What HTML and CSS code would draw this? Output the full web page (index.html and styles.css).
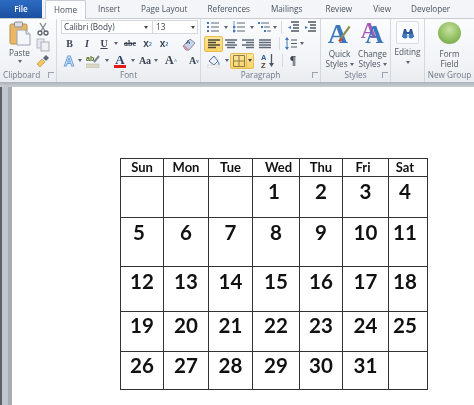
FILE: index.html
```html
<!DOCTYPE html>
<html lang="en">
<head>
<meta charset="utf-8">
<title>Calendar document</title>
<link rel="stylesheet" href="styles.css">
</head>
<body>
<div class="app">
  <nav class="tabs">
    <span class="tab file">File</span>
    <span class="tab home">Home</span>
    <span class="tab t-insert">Insert</span>
    <span class="tab t-layout">Page Layout</span>
    <span class="tab t-ref">References</span>
    <span class="tab t-mail">Mailings</span>
    <span class="tab t-review">Review</span>
    <span class="tab t-view">View</span>
    <span class="tab t-dev">Developer</span>
  </nav>
  <div class="ribbon">
    <section class="grp g-clip">
      <div class="body clip-body">
        <div class="paste">
          <svg width="22" height="25" viewBox="0 0 22 25"><rect x="1" y="3" width="17" height="20" rx="1.500" fill="#e9b765" stroke="#b98d45"/><rect x="5.500" y="1" width="8" height="5" rx="1" fill="#d9dde3" stroke="#8b8f96"/><path d="M8 9h9l4 4v11H8z" fill="#f4f6fa" stroke="#9aa3b2"/><path d="M17 9v4h4" fill="#dfe4ec" stroke="#9aa3b2"/></svg>
          <span class="big-label">Paste</span>
          <i class="arr"></i>
        </div>
        <div class="clip-tools">
          <svg width="14" height="14" viewBox="0 0 14 14"><path d="M4 1l5 8M10 1L5 9" stroke="#7d8694" stroke-width="1.300" fill="none"/><circle cx="4" cy="11" r="2" fill="none" stroke="#59606c" stroke-width="1.300"/><circle cx="10" cy="11" r="2" fill="none" stroke="#59606c" stroke-width="1.300"/></svg>
          <svg width="14" height="14" viewBox="0 0 14 14"><rect x="1" y="1" width="7" height="9" fill="#e6e8ec" stroke="#b4b9c1"/><rect x="5" y="4" width="8" height="9" fill="#eef0f3" stroke="#aab0b9"/></svg>
          <svg width="14" height="14" viewBox="0 0 14 14"><path d="M1 10l5-5 3 3-5 5z" fill="#f1c860" stroke="#a98a3a" stroke-width=".6"/><path d="M7 4l3-3 3 3-3 3z" fill="#5b6676"/></svg>
        </div>
      </div>
      <div class="label">Clipboard<i class="launch"></i></div>
    </section>

    <section class="grp g-font">
      <div class="body font-body">
        <div class="combo">
          <span class="c-name">Calibri (Body)<i class="arr dark"></i></span>
          <span class="c-size">13<i class="arr dark"></i></span>
        </div>
        <div class="row">
          <span class="cell w17 tb">B</span>
          <span class="cell w18 ti">I</span>
          <span class="cell w16 tu">U</span>
          <span class="cell w8"><i class="arr"></i></span>
          <span class="cell w20 ts">abe</span>
          <span class="cell w15 tx">x<sub>2</sub></span>
          <span class="cell w18 tx">x<sup>2</sup></span>
          <span class="cell w25 end">
            <svg width="15" height="14" viewBox="0 0 15 14"><path d="M2 9l7-7 5 4-6 7H5z" fill="#c7d4ea" stroke="#7f8ea8"/><path d="M3 9l4 4" stroke="#d98ea0" stroke-width="2"/><text x="5" y="7" font-size="6" font-family="Liberation Sans" fill="#36507c" font-weight="700">A</text></svg>
          </span>
        </div>
        <div class="row">
          <span class="cell w16"><svg width="14" height="14" viewBox="0 0 14 14"><text x="7" y="12" text-anchor="middle" font-size="14" font-family="Liberation Sans" font-weight="700" fill="#eaf3ff" stroke="#6ea2dc" stroke-width="1">A</text></svg></span>
          <span class="cell w6"><i class="arr"></i></span>
          <span class="cell w20"><svg width="14" height="14" viewBox="0 0 14 14"><text x="0" y="7" font-size="7" font-family="Liberation Sans" font-weight="700" fill="#4d6a1a">ab</text><path d="M8 8l5-6" stroke="#7b8594" stroke-width="2"/><rect x="0" y="10" width="13" height="4" fill="#d9d8c4" stroke="#b0b0a0" stroke-width=".5"/></svg></span>
          <span class="cell w8"><i class="arr"></i></span>
          <span class="cell w18"><svg width="14" height="14" viewBox="0 0 14 14"><text x="7" y="10" text-anchor="middle" font-size="13" font-family="Liberation Serif" font-weight="700" fill="#27406b">A</text><rect x="1" y="11" width="12" height="3" fill="#e01b1b"/></svg></span>
          <span class="cell w8"><i class="arr"></i></span>
          <span class="cell w16 taa">Aa</span>
          <span class="cell w6"><i class="arr"></i></span>
          <span class="cell w27 end tgrow">A<sup>^</sup></span>
          <span class="cell w16 tshrink">A<sup>v</sup></span>
        </div>
      </div>
      <div class="label">Font</div>
    </section>

    <section class="grp g-para">
      <div class="body para-body">
        <div class="row top">
          <span class="cell w16"><svg width="12" height="12" viewBox="0 0 12 12"><path d="M4 2h8M4 6h8M4 10h8" stroke="#5d6877"/><path d="M0 1h2v2H0zM0 5h2v2H0zM0 9h2v2H0z" fill="#3f76bd"/></svg></span>
          <span class="cell w10"><i class="arr"></i></span>
          <span class="cell w16"><svg width="12" height="12" viewBox="0 0 12 12"><path d="M4 2h8M4 6h8M4 10h8" stroke="#5d6877"/><path d="M1 0v4M0 5h2v2H0zM0 9h2v2H0z" stroke="#3f76bd" fill="#3f76bd" stroke-width=".7"/></svg></span>
          <span class="cell w10"><i class="arr"></i></span>
          <span class="cell w15"><svg width="13" height="12" viewBox="0 0 13 12"><path d="M3 2h8M6 6h6M9 10h4" stroke="#5d6877"/><path d="M0 1h2v2H0zM3 5h2v2H3zM6 9h2v2H6z" fill="#3f76bd"/></svg></span>
          <span class="cell w6"><i class="arr"></i></span>
          <span class="vsep s-top"></span>
          <span class="cell w18"><svg width="12" height="12" viewBox="0 0 12 12"><path d="M4 1h8M6 4h6M6 7h6M4 10h8" stroke="#4d5866" stroke-width="1.400"/><path d="M4 5l-3 1.500 3 1.500z" fill="#3f76bd"/></svg></span>
          <span class="cell w16"><svg width="12" height="12" viewBox="0 0 12 12"><path d="M4 1h8M6 4h6M6 7h6M4 10h8" stroke="#4d5866" stroke-width="1.400"/><path d="M1 5l3 1.500-3 1.500z" fill="#3f76bd"/></svg></span>
        </div>
        <div class="row">
          <span class="btn-on a-left"><svg width="12" height="10" viewBox="0 0 12 10"><path d="M0 1h12M0 3.500h8M0 6h12M0 8.500h8" stroke="#4c4a3a" stroke-width="1.700"/></svg></span>
          <span class="cell w16"><svg width="12" height="10" viewBox="0 0 12 10"><path d="M0 1h12M2 3.500h8M0 6h12M2 8.500h8" stroke="#5d6877" stroke-width="1.500"/></svg></span>
          <span class="cell w17"><svg width="12" height="10" viewBox="0 0 12 10"><path d="M0 1h12M4 3.500h8M0 6h12M4 8.500h8" stroke="#5d6877" stroke-width="1.500"/></svg></span>
          <span class="cell w17"><svg width="12" height="10" viewBox="0 0 12 10"><path d="M0 1h12M0 3.500h12M0 6h12M0 8.500h12" stroke="#5d6877" stroke-width="1.500"/></svg></span>
          <span class="vsep s-mid"></span>
          <span class="cell w16 after-sep"><svg width="12" height="13" viewBox="0 0 12 13"><path d="M2 1v11" stroke="#3f76bd"/><path d="M0 3l2-3 2 3zM0 10l2 3 2-3z" fill="#3f76bd"/><path d="M6 3h6M6 6.500h6M6 10h6" stroke="#4d5866"/></svg></span>
          <span class="cell w6"><i class="arr"></i></span>
        </div>
        <div class="row">
          <span class="cell w18"><svg width="14" height="14" viewBox="0 0 14 14"><path d="M2 7l5-5 4 5-4 4z" fill="#eef2f7" stroke="#4f6e9c"/><path d="M11 7c2 2 2 4 1 4s-1-2-1-4" fill="#4f9ddc"/><rect x="0" y="11" width="12" height="3" fill="#f4f4f4" stroke="#c0c0c0" stroke-width=".5"/></svg></span>
          <span class="cell w7"><i class="arr"></i></span>
          <span class="btn-on border">
            <span class="b-main"><svg width="12" height="12" viewBox="0 0 12 12"><path d="M.5.500h11v11H.500zM6 .500v11M.500 6h11" fill="none" stroke="#8b7d4a"/></svg></span>
            <span class="b-arr"><i class="arr dark"></i></span>
          </span>
          <span class="cell w28"><svg width="14" height="15" viewBox="0 0 14 15"><text x="0" y="7" font-size="7.500" font-family="Liberation Sans" font-weight="700" fill="#2f5a98">A</text><text x="0" y="15" font-size="7.500" font-family="Liberation Sans" font-weight="700" fill="#54402a">Z</text><path d="M10.500 1v11" stroke="#4d5866" stroke-width="1.300"/><path d="M8 10l2.500 4 2.500-4z" fill="#4d5866"/></svg></span>
          <span class="vsep"></span>
          <span class="cell w20 tp">¶</span>
        </div>
      </div>
      <div class="label">Paragraph<i class="launch"></i></div>
    </section>

    <section class="grp g-styles">
      <div class="body style-body">
        <div class="big">
          <svg width="26" height="24" viewBox="0 0 26 24"><text x="-1" y="22.500" font-size="32" font-family="Liberation Serif" fill="#3c76bd" font-weight="700">A</text><path d="M13 19L24 4" stroke="#8a8f55" stroke-width="2.500"/><path d="M12 21l3-3" stroke="#b94d2b" stroke-width="3"/></svg>
          <span class="big-label">Quick</span>
          <span class="big-label">Styles<i class="arr"></i></span>
        </div>
        <div class="big">
          <svg width="26" height="24" viewBox="0 0 26 24"><text x="-1" y="17" font-size="26" font-family="Liberation Serif" fill="#a45ab8" font-weight="700">A</text><text x="4" y="22.500" font-size="29" font-family="Liberation Serif" fill="#3c76bd" font-weight="700">A</text></svg>
          <span class="big-label">Change</span>
          <span class="big-label">Styles<i class="arr"></i></span>
        </div>
      </div>
      <div class="label">Styles<i class="launch"></i></div>
    </section>

    <section class="grp g-edit">
      <div class="edit-body">
        <span class="edit-btn"><svg width="14" height="12" viewBox="0 0 14 12"><path d="M1 10l2-8h2l1 3h2l1-3h2l2 8H9L8 7H6l-1 3z" fill="#2f5a98"/><circle cx="4" cy="9" r="2.500" fill="#3f76bd"/><circle cx="10" cy="9" r="2.500" fill="#3f76bd"/></svg></span>
        <span class="big-label">Editing</span>
        <i class="arr"></i>
      </div>
    </section>

    <section class="grp g-new">
      <div class="body new-body">
        <div class="big">
          <span class="orb"></span>
          <span class="big-label">Form</span>
          <span class="big-label">Field</span>
        </div>
      </div>
      <div class="label">New Group</div>
    </section>
  </div>
  <div class="band"></div>
  <main class="workspace">
    <div class="page">
      <table class="cal">
        <colgroup><col class="c1"><col class="c2"><col class="c3"><col class="c4"><col class="c5"><col class="c6"><col class="c7"></colgroup>
        <thead>
          <tr><th>Sun</th><th>Mon</th><th>Tue</th><th class="hw">Wed</th><th>Thu</th><th class="hf">Fri</th><th class="hs">Sat</th></tr>
        </thead>
        <tbody>
          <tr class="r1"><td></td><td></td><td></td><td class="l2">1</td><td>2</td><td>3</td><td class="l3">4</td></tr>
          <tr class="r2"><td class="l3">5</td><td>6</td><td>7</td><td>8</td><td>9</td><td>10</td><td class="l3">11</td></tr>
          <tr class="r3"><td>12</td><td>13</td><td>14</td><td>15</td><td>16</td><td>17</td><td class="l3">18</td></tr>
          <tr class="r4"><td>19</td><td>20</td><td>21</td><td>22</td><td>23</td><td>24</td><td class="l3">25</td></tr>
          <tr class="r5"><td>26</td><td>27</td><td>28</td><td>29</td><td>30</td><td>31</td><td></td></tr>
        </tbody>
      </table>
    </div>
  </main>
</div>
</body>
</html>
```
FILE: styles.css
```css
* { box-sizing: border-box; }
html, body { margin: 0; padding: 0; background: #fff; }
.app { width: 474px; height: 405px; overflow: hidden; display: flex; flex-direction: column; font-family: "Open Sans", "Liberation Sans", sans-serif; }

/* tabs */
.tabs { height: 18px; flex: none; display: flex; background: #f3f5f8; position: relative; z-index: 1; filter: blur(.3px); }
.tab { font-size: 8.2px; line-height: 18px; color: #4c5562; white-space: nowrap; }
.file { width: 42px; background: linear-gradient(#2c6cc4, #1c4f9f); color: #fff; text-align: center; font-weight: 600; }
.home { width: 41px; margin-left: 3px; height: 19px; background: #fbfcfd; border: 1px solid #c8ccd2; border-bottom: 0; border-radius: 2px 2px 0 0; text-align: center; }
.t-insert { margin-left: 12px; }
.t-layout { margin-left: 21px; }
.t-ref { margin-left: 20px; }
.t-mail { margin-left: 21px; }
.t-review { margin-left: 23px; }
.t-view { margin-left: 21px; }
.t-dev { margin-left: 20px; }

/* ribbon */
.ribbon { height: 64px; flex: none; display: flex; background: linear-gradient(#fbfcfd, #f1f3f6 70%, #e9ecf0); border-top: 1px solid #c8ccd2; filter: blur(.3px); }
.grp { display: flex; flex-direction: column; border-right: 1px solid #d5d9df; flex: none; }
.g-clip { width: 57px; }
.g-font { width: 144px; }
.g-para { width: 120px; }
.g-styles { width: 70px; }
.g-edit { width: 34px; }
.g-new { flex: 1; border-right: 0; }
.body { flex: 1; min-height: 0; }
.label { height: 13px; flex: none; font-size: 8.2px; line-height: 12px; color: #717a87; text-align: center; position: relative; white-space: nowrap; }
.g-clip .label { text-align: left; padding-left: 3px; }
.launch { position: absolute; right: 2px; top: 3px; width: 6px; height: 6px; border: 1px solid #9aa1ab; border-width: 1px 0 0 1px; }
.arr { display: inline-block; width: 0; height: 0; border: 2px solid transparent; border-top: 3px solid #5b6472; border-bottom: 0; vertical-align: middle; }
.arr.dark { border-top-color: #444; }
.big-label { display: block; font-size: 8.2px; line-height: 10px; color: #4c5562; text-align: center; white-space: nowrap; }
.big-label .arr { margin-left: 2px; }

/* clipboard */
.clip-body { display: flex; padding: 2px 0 0 6px; }
.paste { width: 27px; display: flex; flex-direction: column; align-items: center; }
.paste .big-label { margin-top: 2px; }
.paste .arr { margin-top: 2px; }
.clip-tools { display: flex; flex-direction: column; gap: 2px; margin-left: 3px; padding-top: 1px; }

/* rows */
.row { display: flex; height: 15px; align-items: center; margin-top: 2px; }
.row.top { margin-top: 0; height: 14px; }
.font-body { padding: 1px 0 0 4px; }
.para-body { padding: 1px 0 0 4px; }
.cell { display: flex; align-items: center; justify-content: center; flex: none; height: 15px; color: #3b4350; }
.w6 { width: 6px; } .w7 { width: 7px; } .w8 { width: 8px; } .w10 { width: 10px; }
.w15 { width: 15px; } .w16 { width: 16px; } .w17 { width: 17px; } .w18 { width: 18px; }
.w20 { width: 20px; } .w25 { width: 25px; } .w27 { width: 27px; } .w28 { width: 28px; }
.end { justify-content: flex-end; padding-right: 2px; }
.combo { display: flex; height: 14px; width: 137px; background: #fff; border: 1px solid #d4d8de; font-size: 8.2px; line-height: 12px; color: #3b4350; }
.c-name { width: 91px; padding-left: 2px; display: flex; justify-content: space-between; align-items: center; padding-right: 4px; border-right: 1px solid #d4d8de; }
.c-size { flex: 1; padding-left: 3px; display: flex; justify-content: space-between; align-items: center; padding-right: 2px; }
.tb { font: 700 10px "Liberation Serif", serif; }
.ti { font: italic 700 10px "Liberation Serif", serif; }
.tu { font: 700 10px "Liberation Serif", serif; text-decoration: underline; }
.ts { font: 700 8px "Liberation Serif", serif; text-decoration: line-through; }
.tx { font: 700 10px "Liberation Sans", sans-serif; }
.tx sub, .tx sup { font-size: 5px; color: #3f76bd; }
.taa { font: 700 10px "Liberation Serif", serif; }
.tgrow { font: 700 12px "Liberation Serif", serif; padding-left: 6px; justify-content: flex-start; }
.tshrink { font: 700 10px "Liberation Serif", serif; }
.tgrow sup, .tshrink sup { font-size: 6px; color: #3f76bd; }
.tp { font: 700 12px "Liberation Serif", serif; }
.vsep { width: 1px; height: 13px; background: #d5d9df; flex: none; }
.s-top { margin: 0 2px 0 3px; }
.s-mid { margin-left: 6px; }
.after-sep { margin-left: 3px; }
.btn-on { display: flex; align-items: center; justify-content: center; height: 16px; flex: none; background: linear-gradient(#fde59a, #fbd568); border: 1px solid #e8bb52; border-radius: 2px; }
.a-left { width: 19px; margin-left: -1px; }
.border { width: 24px; justify-content: flex-start; }
.b-main { width: 16px; display: flex; justify-content: center; border-right: 1px solid #e8bb52; height: 14px; align-items: center; }
.b-arr { flex: 1; display: flex; justify-content: center; }

/* styles */
.style-body { display: flex; padding: 4px 0 0 2px; }
.big { width: 33px; display: flex; flex-direction: column; align-items: center; }
.big svg { margin-bottom: 5px; }

/* editing */
.edit-body { display: flex; flex-direction: column; align-items: center; padding-top: 2px; }
.edit-btn { width: 23px; height: 23px; display: flex; align-items: center; justify-content: center; background: #fbfcfd; border: 1px solid #d8dce2; border-radius: 2px; margin-bottom: 3px; }
.edit-body .arr { margin-top: 4px; }

/* new group */
.new-body { display: flex; justify-content: center; padding-top: 3px; }
.orb { width: 23px; height: 23px; border-radius: 50%; background: radial-gradient(circle at 50% 35%, #c9e3a2, #8fbf60 55%, #6c9c45); margin-bottom: 5px; }

/* chrome */
.band { height: 5px; flex: none; background: linear-gradient(#aeb3bb, #c9cdd3); }
.workspace { flex: 1; display: flex; min-height: 0; background: linear-gradient(90deg, #5c6068 0 2px, #c3c7cd 2px 8px, #a8acb3 8px 12px); padding-left: 12px; }
.page { flex: 1; background: #fff; padding: 71px 0 0 108px; }

/* calendar */
.cal { border-collapse: collapse; table-layout: fixed; width: 307px; font-family: Lato, "Liberation Sans", sans-serif; color: #111; filter: blur(.25px); }
.c1 { width: 43px; } .c2 { width: 45px; } .c3 { width: 44px; } .c4 { width: 47px; } .c5 { width: 43px; } .c6 { width: 46px; } .c7 { width: 39px; }
.cal th, .cal td { border: 1px solid #333; padding: 0; text-align: center; vertical-align: top; }
.cal th { height: 18px; font-size: 13px; font-weight: 700; line-height: 17px; }
.cal td { font-size: 20.5px; font-weight: 700; line-height: 24px; padding-top: 2px; }
.r1 td { height: 41px; }
.r2 td { height: 49px; }
.r3 td { height: 45px; }
.r4 td { height: 40px; padding-top: 1px; }
.r5 td { height: 38px; padding-top: 1px; }
.l2 { padding-right: 4px !important; }
.l3 { padding-right: 6px !important; }
.hw { padding-left: 5px !important; }
.hf { padding-right: 5px !important; }
.hs { padding-right: 6px !important; }
```
